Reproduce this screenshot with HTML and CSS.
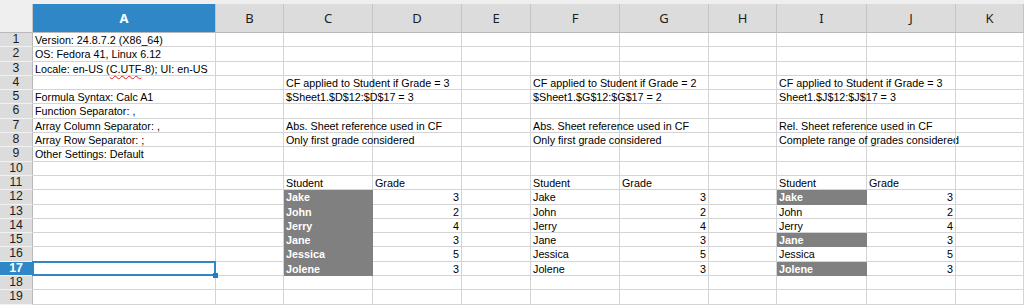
FILE: index.html
```html
<!DOCTYPE html>
<html lang="en">
  <head>
    <meta charset="UTF-8" />
    <title>Sheet1</title>
    <link rel="stylesheet" href="styles.css">
  </head>
  <body>
    <div class="top-strip"></div>
    <div class="sheet">
      <div class="row head">
        <div class="corner"></div>
        <div class="col-hdr active">A</div>
        <div class="col-hdr">B</div>
        <div class="col-hdr">C</div>
        <div class="col-hdr">D</div>
        <div class="col-hdr">E</div>
        <div class="col-hdr">F</div>
        <div class="col-hdr">G</div>
        <div class="col-hdr">H</div>
        <div class="col-hdr">I</div>
        <div class="col-hdr">J</div>
        <div class="col-hdr">K</div>
      </div>

      <div class="row">
        <div class="rh">1</div>
        <div class="cell">Version: 24.8.7.2 (X86_64)</div>
        <div class="cell"></div><div class="cell"></div><div class="cell"></div><div class="cell"></div><div class="cell"></div>
        <div class="cell"></div><div class="cell"></div><div class="cell"></div><div class="cell"></div><div class="cell"></div>
      </div>
      <div class="row">
        <div class="rh">2</div>
        <div class="cell">OS: Fedora 41, Linux 6.12</div>
        <div class="cell"></div><div class="cell"></div><div class="cell"></div><div class="cell"></div><div class="cell"></div>
        <div class="cell"></div><div class="cell"></div><div class="cell"></div><div class="cell"></div><div class="cell"></div>
      </div>
      <div class="row">
        <div class="rh">3</div>
        <div class="cell">Locale: en-US (<span class="spell">C.UTF</span>-8); UI: en-US</div>
        <div class="cell"></div><div class="cell"></div><div class="cell"></div><div class="cell"></div><div class="cell"></div>
        <div class="cell"></div><div class="cell"></div><div class="cell"></div><div class="cell"></div><div class="cell"></div>
      </div>
      <div class="row">
        <div class="rh">4</div>
        <div class="cell"></div><div class="cell"></div>
        <div class="cell">CF applied to Student if Grade = 3</div>
        <div class="cell"></div><div class="cell"></div>
        <div class="cell">CF applied to Student if Grade = 2</div>
        <div class="cell"></div><div class="cell"></div>
        <div class="cell">CF applied to Student if Grade = 3</div>
        <div class="cell"></div><div class="cell"></div>
      </div>
      <div class="row">
        <div class="rh">5</div>
        <div class="cell">Formula Syntax: Calc A1</div>
        <div class="cell"></div>
        <div class="cell">$Sheet1.$D$12:$D$17 = 3</div>
        <div class="cell"></div><div class="cell"></div>
        <div class="cell">$Sheet1.$G$12:$G$17 = 2</div>
        <div class="cell"></div><div class="cell"></div>
        <div class="cell">Sheet1.$J$12:$J$17 = 3</div>
        <div class="cell"></div><div class="cell"></div>
      </div>
      <div class="row">
        <div class="rh">6</div>
        <div class="cell">Function Separator: ,</div>
        <div class="cell"></div><div class="cell"></div><div class="cell"></div><div class="cell"></div><div class="cell"></div>
        <div class="cell"></div><div class="cell"></div><div class="cell"></div><div class="cell"></div><div class="cell"></div>
      </div>
      <div class="row">
        <div class="rh">7</div>
        <div class="cell">Array Column Separator: ,</div>
        <div class="cell"></div>
        <div class="cell">Abs. Sheet reference used in CF</div>
        <div class="cell"></div><div class="cell"></div>
        <div class="cell">Abs. Sheet reference used in CF</div>
        <div class="cell"></div><div class="cell"></div>
        <div class="cell">Rel. Sheet reference used in CF</div>
        <div class="cell"></div><div class="cell"></div>
      </div>
      <div class="row">
        <div class="rh">8</div>
        <div class="cell">Array Row Separator: ;</div>
        <div class="cell"></div>
        <div class="cell">Only first grade considered</div>
        <div class="cell"></div><div class="cell"></div>
        <div class="cell">Only first grade considered</div>
        <div class="cell"></div><div class="cell"></div>
        <div class="cell">Complete range of grades considered</div>
        <div class="cell"></div><div class="cell"></div>
      </div>
      <div class="row">
        <div class="rh">9</div>
        <div class="cell">Other Settings: Default</div>
        <div class="cell"></div><div class="cell"></div><div class="cell"></div><div class="cell"></div><div class="cell"></div>
        <div class="cell"></div><div class="cell"></div><div class="cell"></div><div class="cell"></div><div class="cell"></div>
      </div>
      <div class="row">
        <div class="rh">10</div>
        <div class="cell"></div><div class="cell"></div><div class="cell"></div><div class="cell"></div><div class="cell"></div><div class="cell"></div>
        <div class="cell"></div><div class="cell"></div><div class="cell"></div><div class="cell"></div><div class="cell"></div>
      </div>
      <div class="row">
        <div class="rh">11</div>
        <div class="cell"></div><div class="cell"></div>
        <div class="cell">Student</div><div class="cell">Grade</div>
        <div class="cell"></div>
        <div class="cell">Student</div><div class="cell">Grade</div>
        <div class="cell"></div>
        <div class="cell">Student</div><div class="cell">Grade</div>
        <div class="cell"></div>
      </div>
      <div class="row">
        <div class="rh">12</div>
        <div class="cell"></div><div class="cell"></div>
        <div class="cell fill">Jake</div><div class="cell num">3</div>
        <div class="cell"></div>
        <div class="cell">Jake</div><div class="cell num">3</div>
        <div class="cell"></div>
        <div class="cell fill">Jake</div><div class="cell num">3</div>
        <div class="cell"></div>
      </div>
      <div class="row">
        <div class="rh">13</div>
        <div class="cell"></div><div class="cell"></div>
        <div class="cell fill">John</div><div class="cell num">2</div>
        <div class="cell"></div>
        <div class="cell">John</div><div class="cell num">2</div>
        <div class="cell"></div>
        <div class="cell">John</div><div class="cell num">2</div>
        <div class="cell"></div>
      </div>
      <div class="row">
        <div class="rh">14</div>
        <div class="cell"></div><div class="cell"></div>
        <div class="cell fill">Jerry</div><div class="cell num">4</div>
        <div class="cell"></div>
        <div class="cell">Jerry</div><div class="cell num">4</div>
        <div class="cell"></div>
        <div class="cell">Jerry</div><div class="cell num">4</div>
        <div class="cell"></div>
      </div>
      <div class="row">
        <div class="rh">15</div>
        <div class="cell"></div><div class="cell"></div>
        <div class="cell fill">Jane</div><div class="cell num">3</div>
        <div class="cell"></div>
        <div class="cell">Jane</div><div class="cell num">3</div>
        <div class="cell"></div>
        <div class="cell fill">Jane</div><div class="cell num">3</div>
        <div class="cell"></div>
      </div>
      <div class="row">
        <div class="rh">16</div>
        <div class="cell"></div><div class="cell"></div>
        <div class="cell fill">Jessica</div><div class="cell num">5</div>
        <div class="cell"></div>
        <div class="cell">Jessica</div><div class="cell num">5</div>
        <div class="cell"></div>
        <div class="cell">Jessica</div><div class="cell num">5</div>
        <div class="cell"></div>
      </div>
      <div class="row">
        <div class="rh active">17</div>
        <div class="cell selected"></div><div class="cell"></div>
        <div class="cell fill">Jolene</div><div class="cell num">3</div>
        <div class="cell"></div>
        <div class="cell">Jolene</div><div class="cell num">3</div>
        <div class="cell"></div>
        <div class="cell fill">Jolene</div><div class="cell num">3</div>
        <div class="cell"></div>
      </div>
      <div class="row">
        <div class="rh">18</div>
        <div class="cell"></div><div class="cell"></div><div class="cell"></div><div class="cell"></div><div class="cell"></div><div class="cell"></div>
        <div class="cell"></div><div class="cell"></div><div class="cell"></div><div class="cell"></div><div class="cell"></div>
      </div>
      <div class="row">
        <div class="rh">19</div>
        <div class="cell"></div><div class="cell"></div><div class="cell"></div><div class="cell"></div><div class="cell"></div><div class="cell"></div>
        <div class="cell"></div><div class="cell"></div><div class="cell"></div><div class="cell"></div><div class="cell"></div>
      </div>
    </div>
  </body>
</html>
```

FILE: styles.css
```css
body {
  margin: 0;
  background: #ffffff;
  overflow: hidden;
  font-family: "Liberation Sans", Arial, sans-serif;
}
.top-strip {
  height: 4px;
  background-color: #efefef;
}
.sheet {
  width: 1024px;
}
.row {
  display: grid;
  grid-template-columns: 33px 183px 68px 89px 89px 69px 89px 89px 68px 90px 89px 68px;
  height: 14.3px;
}
.row.head {
  height: 29px;
}
.corner {
  background-color: #efefef;
  border-right: 1px solid #c6c6c6;
  border-bottom: 1px solid #b9b9b9;
  box-sizing: border-box;
}
.col-hdr {
  box-sizing: border-box;
  background-color: #dcdcdc;
  border-right: 1px solid #c4c4c4;
  border-bottom: 1px solid #b9b9b9;
  font-family: "Noto Sans", "Open Sans", sans-serif;
  font-size: 13px;
  color: #1e1e1e;
  display: flex;
  align-items: center;
  justify-content: center;
}
.col-hdr.active {
  background-color: #2f87c8;
  color: #ffffff;
  font-weight: bold;
}
.rh {
  box-sizing: border-box;
  background-color: #dcdcdc;
  border-right: 1px solid #b9b9b9;
  border-bottom: 1px solid #f2f2f2;
  font-family: "Liberation Sans", Arial, sans-serif;
  font-size: 12.3px;
  line-height: 13px;
  color: #1e1e1e;
  text-align: center;
}
.rh.active {
  background-color: #2f87c8;
  color: #ffffff;
  font-weight: bold;
}
.cell {
  box-sizing: border-box;
  border-right: 1px solid #d4d4d4;
  border-bottom: 1px solid #d4d4d4;
  padding: 2px 2px 0 2px;
  font-size: 10.75px;
  line-height: 11px;
  color: #000000;
  white-space: nowrap;
  overflow: visible;
}
.num {
  text-align: right;
}
.fill {
  background-color: #808080;
  border-color: #808080;
  color: #ffffff;
  font-weight: bold;
}
.spell {
  text-decoration: underline wavy #e02020;
  text-decoration-thickness: 1px;
  text-underline-offset: 2px;
}
.selected {
  position: relative;
}
.selected::before {
  content: "";
  position: absolute;
  left: -1px;
  top: -1px;
  right: -1px;
  bottom: -1px;
  border: 2px solid #2f87c8;
}
.selected::after {
  content: "";
  position: absolute;
  right: -3px;
  bottom: -3px;
  width: 5px;
  height: 5px;
  background-color: #2a7cc0;
}
```
